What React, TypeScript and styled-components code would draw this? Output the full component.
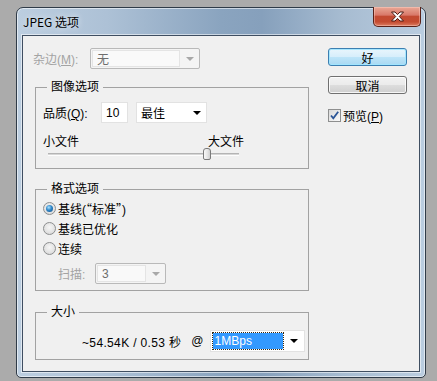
import React from 'react';
import styled, { createGlobalStyle } from 'styled-components';

const GlobalStyle = createGlobalStyle`
	html, body {
		margin: 0;
		padding: 0;
		background: #ababab;
	}
	body {
		font-family: "Liberation Sans", "Noto Sans CJK SC", sans-serif;
		font-size: 12px;
		color: #000;
	}
`;

const Screen = styled.div`
	width: 437px;
	height: 381px;
	box-sizing: border-box;
	padding: 7px 0 0 16px;
`;

const Window = styled.div`
	width: 410px;
	height: 371px;
	box-sizing: border-box;
	display: flex;
	flex-direction: column;
	padding: 0 5px 5px;
	border: 1px solid #2f3b48;
	border-radius: 7px 7px 5px 5px;
	box-shadow: inset 0 0 0 1px rgba(255, 255, 255, 0.55);
	background: linear-gradient(
		90deg,
		#bccee0 0%,
		#adc1d6 22%,
		#8aa4bf 50%,
		#86a0bc 60%,
		#a7bcd1 80%,
		#bacde0 100%
	);
`;

const TitleBar = styled.div`
	height: 27px;
	display: flex;
	align-items: flex-start;
	justify-content: space-between;
`;

const TitleText = styled.div`
	height: 27px;
	display: flex;
	align-items: center;
	padding-left: 1px;
	font-family: "Noto Sans CJK SC", sans-serif;
	font-size: 12px;
	color: #000;
	text-shadow: 0 0 6px rgba(255, 255, 255, 0.9);
`;

const CloseButton = styled.div`
	width: 48px;
	height: 20px;
	box-sizing: border-box;
	margin: -1px -1px 0 0;
	display: flex;
	align-items: center;
	justify-content: center;
	border: 1px solid #5a2118;
	border-top: none;
	border-radius: 0 0 5px 5px;
	background: linear-gradient(
		180deg,
		#e9a896 0%,
		#d9796a 42%,
		#c34a32 50%,
		#c44b30 78%,
		#dc7d62 100%
	);
	box-shadow: inset 0 0 0 1px rgba(255, 210, 200, 0.45);
`;

const Client = styled.div`
	flex: 1;
	display: flex;
	padding-top: 12px;
	background: #f0f0f0;
	border: 1px solid #3f4e61;
	box-shadow: 0 0 0 1px rgba(255, 255, 255, 0.55);
`;

const LeftColumn = styled.div`
	width: 274px;
	margin-left: 12px;
	display: flex;
	flex-direction: column;
`;

const RightColumn = styled.div`
	width: 79px;
	margin-left: 19px;
	display: flex;
	flex-direction: column;
`;

const FieldRow = styled.div<{ $indent?: number }>`
	display: flex;
	align-items: center;
	height: 21px;
	margin-left: ${(p) => p.$indent ?? 0}px;
`;

const Label = styled.span<{ $width?: number; $disabled?: boolean }>`
	display: inline-block;
	width: ${(p) => (p.$width ? `${p.$width}px` : 'auto')};
	color: ${(p) => (p.$disabled ? '#a3a3a3' : '#000')};
	white-space: nowrap;
`;

const Key = styled.span`
	text-decoration: underline;
`;

const CjkQuote = styled.span`
	font-family: "Noto Sans CJK SC", sans-serif;
`;

const Group = styled.fieldset<{ $top: number }>`
	margin: ${(p) => p.$top}px 0 0;
	padding: 0;
	min-width: 0;
	border: 1px solid #a2a2a2;
`;

const Legend = styled.legend`
	margin-left: 11px;
	padding: 0 4px;
	line-height: 16px;
	font-size: 12px;
`;

const GroupBody = styled.div<{ $pad: string }>`
	padding: ${(p) => p.$pad};
	display: flex;
	flex-direction: column;
`;

const ComboBox = styled.div<{ $width: number; $disabled?: boolean }>`
	width: ${(p) => p.$width}px;
	height: 21px;
	box-sizing: border-box;
	display: flex;
	align-items: stretch;
	border: 1px solid ${(p) => (p.$disabled ? '#b9b9b9' : '#e2e2e2')};
	border-radius: ${(p) => (p.$disabled ? '2px' : '0')};
	background: ${(p) => (p.$disabled ? '#f4f4f4' : '#fff')};
`;

const ComboField = styled.div<{ $disabled?: boolean }>`
	flex: 1;
	display: flex;
	align-items: center;
	padding-left: 4px;
	margin: ${(p) => (p.$disabled ? '1px 0 1px 1px' : '0')};
	border: ${(p) => (p.$disabled ? '1px solid #e4e4e4' : 'none')};
	background: ${(p) => (p.$disabled ? '#f9f9f9' : 'transparent')};
	color: ${(p) => (p.$disabled ? '#6d6d6d' : '#000')};
`;

const Selection = styled.span`
	flex: 1;
	align-self: stretch;
	display: flex;
	align-items: center;
	margin: 2px 2px 2px -2px;
	padding-left: 2px;
	background: #3399ff;
	color: #fff;
	outline: 1px dotted #3a2a10;
`;

const ComboArrow = styled.div<{ $disabled?: boolean }>`
	width: 19px;
	display: flex;
	align-items: center;
	justify-content: center;

	&::after {
		content: '';
		border-left: 4px solid transparent;
		border-right: 4px solid transparent;
		border-top: 4px solid ${(p) => (p.$disabled ? '#a8a8a8' : '#000')};
	}
`;

const TextInput = styled.div`
	width: 27px;
	height: 21px;
	box-sizing: border-box;
	display: flex;
	align-items: center;
	padding-left: 4px;
	background: #fff;
	border: 1px solid #e2e2e2;
`;

const SliderLabels = styled.div`
	width: 201px;
	height: 16px;
	margin-top: 9px;
	display: flex;
	justify-content: space-between;
	align-items: center;
`;

const Slider = styled.div`
	position: relative;
	width: 191px;
	height: 12px;
	margin-left: 5px;
`;

const SliderTrack = styled.div`
	margin-top: 5px;
	height: 1px;
	border-top: 1px solid #b4b4b4;
	border-bottom: 1px solid #fdfdfd;
	background: #d6d6d6;
`;

const SliderThumb = styled.div`
	position: absolute;
	top: 0;
	width: 8px;
	height: 12px;
	margin-left: -4px;
	box-sizing: border-box;
	border: 1px solid #7a7a7a;
	border-radius: 3px 3px 2px 2px;
	background: linear-gradient(90deg, #f8f8f8 0%, #e6e6e6 55%, #cfcfcf 100%);
`;

const RadioRow = styled.div`
	height: 20px;
	display: flex;
	align-items: center;
	gap: 2px;
`;

const RadioDot = styled.span<{ $checked?: boolean }>`
	width: 13px;
	height: 13px;
	box-sizing: border-box;
	border-radius: 50%;
	border: 1px solid #8c8e8f;
	background: radial-gradient(circle at 50% 40%, #f6f6f6 0%, #e2e2e2 60%, #cfcfcf 100%);
	display: flex;
	align-items: center;
	justify-content: center;

	&::after {
		content: '';
		display: ${(p) => (p.$checked ? 'block' : 'none')};
		width: 7px;
		height: 7px;
		border-radius: 50%;
		background: radial-gradient(circle at 40% 35%, #a9e2ff 0%, #2f86c8 45%, #0f4d86 100%);
	}
`;

const Summary = styled.div`
	height: 22px;
	display: flex;
	align-items: center;
	padding-left: 46px;
`;

const SizeText = styled.span`
	letter-spacing: 0.35px;
`;

const At = styled.span`
	margin: 0 6px 0 10px;
`;

const Button = styled.div<{ $default?: boolean }>`
	width: 79px;
	height: 18px;
	box-sizing: border-box;
	display: flex;
	align-items: center;
	justify-content: center;
	font-family: "Noto Sans CJK SC", sans-serif;
	border-radius: 3px;
	border: 1px solid ${(p) => (p.$default ? '#3c7fb1' : '#707070')};
	background: ${(p) =>
		p.$default
			? 'linear-gradient(180deg, #e8f5fc 0%, #d7eefb 48%, #bde4f8 52%, #a9d9f3 100%)'
			: 'linear-gradient(180deg, #f2f2f2 0%, #ebebeb 48%, #dddddd 52%, #cfcfcf 100%)'};
	box-shadow: inset 0 0 0 1px
		${(p) => (p.$default ? 'rgba(160, 230, 255, 0.9)' : 'rgba(255, 255, 255, 0.8)')};
	& + & {
		margin-top: 10px;
	}
`;

const CheckRow = styled.div`
	margin-top: 15px;
	height: 13px;
	display: flex;
	align-items: center;
	gap: 2px;
`;

const CheckBox = styled.span`
	width: 13px;
	height: 13px;
	box-sizing: border-box;
	border: 1px solid #8e8f8f;
	background: linear-gradient(135deg, #d9d9d9 0%, #ededed 60%, #f9f9f9 100%);
	display: flex;
	align-items: center;
	justify-content: center;
`;

const quality = 10;
const qualityMax = 12;

export default function App() {
	return (
		<>
			<GlobalStyle />
			<Screen>
				<Window>
					<TitleBar>
						<TitleText>JPEG 选项</TitleText>
						<CloseButton>
							<svg width="15" height="11" viewBox="0 0 15 11">
								<path
									d="M1.5 1 H5 L7.5 3.6 L10 1 H13.5 L9.3 5.5 L13.5 10 H10 L7.5 7.4 L5 10 H1.5 L5.7 5.5 Z"
									fill="#fff"
									stroke="#4a1a12"
									strokeWidth="1"
									strokeLinejoin="round"
								/>
							</svg>
						</CloseButton>
					</TitleBar>
					<Client>
						<LeftColumn>
							<FieldRow $indent={-2}>
								<Label $width={57} $disabled>
									杂边(<Key>M</Key>):
								</Label>
								<ComboBox $width={110} $disabled>
									<ComboField $disabled>无</ComboField>
									<ComboArrow $disabled />
								</ComboBox>
							</FieldRow>

							<Group $top={10}>
								<Legend>图像选项</Legend>
								<GroupBody $pad="7px 0 8px 7px">
									<FieldRow>
										<Label $width={58}>
											品质(<Key>Q</Key>):
										</Label>
										<TextInput>10</TextInput>
										<ComboBox $width={71} style={{ marginLeft: 8 }}>
											<ComboField>最佳</ComboField>
											<ComboArrow />
										</ComboBox>
									</FieldRow>
									<SliderLabels>
										<span>小文件</span>
										<span>大文件</span>
									</SliderLabels>
									<Slider>
										<SliderTrack />
										<SliderThumb style={{ left: `${(quality / qualityMax) * 100}%` }} />
									</Slider>
								</GroupBody>
							</Group>

							<Group $top={12}>
								<Legend>格式选项</Legend>
								<GroupBody $pad="1px 0 6px 7px">
									<RadioRow>
										<RadioDot $checked />
										<span>
											基线(<CjkQuote>&ldquo;</CjkQuote>标准<CjkQuote>&rdquo;</CjkQuote>)
										</span>
									</RadioRow>
									<RadioRow>
										<RadioDot />
										<span>基线已优化</span>
									</RadioRow>
									<RadioRow>
										<RadioDot />
										<span>连续</span>
									</RadioRow>
									<FieldRow $indent={15} style={{ marginTop: 5 }}>
										<Label $width={37} $disabled>
											扫描:
										</Label>
										<ComboBox $width={71} $disabled>
											<ComboField $disabled>3</ComboField>
											<ComboArrow $disabled />
										</ComboBox>
									</FieldRow>
								</GroupBody>
							</Group>

							<Group $top={13}>
								<Legend>大小</Legend>
								<GroupBody $pad="10px 0 7px 0">
									<Summary>
										<SizeText>~54.54K / 0.53 秒</SizeText>
										<At>@</At>
										<ComboBox $width={95} style={{ height: 22 }}>
											<ComboField>
												<Selection>1MBps</Selection>
											</ComboField>
											<ComboArrow />
										</ComboBox>
									</Summary>
								</GroupBody>
							</Group>
						</LeftColumn>

						<RightColumn>
							<Button $default>好</Button>
							<Button>取消</Button>
							<CheckRow>
								<CheckBox>
									<svg width="11" height="11" viewBox="0 0 11 11">
										<path
											d="M2 5.5 L4.3 8.3 L9.2 1.8"
											fill="none"
											stroke="#2b5597"
											strokeWidth="1.8"
										/>
									</svg>
								</CheckBox>
								<span>
									预览(<Key>P</Key>)
								</span>
							</CheckRow>
						</RightColumn>
					</Client>
				</Window>
			</Screen>
		</>
	);
}
